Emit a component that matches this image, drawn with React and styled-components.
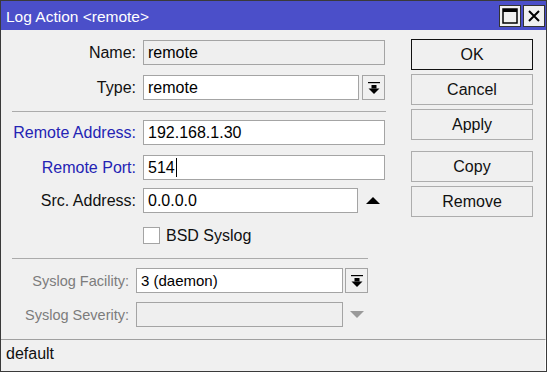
import React from 'react';
import styled, { createGlobalStyle } from 'styled-components';

const Global = createGlobalStyle`
    html, body {
        margin: 0;
        padding: 0;
        background: #f0f0f0;
    }
    body {
        font-family: "Liberation Sans", Arial, sans-serif;
    }
`

function DropIcon() {
    return (
        <svg width="12" height="12" viewBox="0 0 12 12">
            <rect x="0" y="0" width="12" height="1.2" fill="#000" />
            <rect x="3.5" y="3" width="5" height="3.5" fill="#000" />
            <polygon points="0.5,6.5 11.5,6.5 6,12" fill="#000" />
        </svg>
    )
}

function Triangle({ up, color }) {
    return (
        <svg width="14" height="7" viewBox="0 0 14 7">
            <polygon points={up ? '0,7 14,7 7,0' : '0,0 14,0 7,7'} fill={color} />
        </svg>
    )
}

function App() {
    return (
        <>
            <Global />
            <Window>
                <TitleBar>
                    <TitleText>Log Action &lt;remote&gt;</TitleText>
                    <WinButtons>
                        <WinButton>
                            <svg width="16" height="16" viewBox="0 0 16 16">
                                <rect x="1" y="1" width="14" height="14" fill="none" stroke="#000" strokeWidth="1.5" />
                                <rect x="1" y="1" width="14" height="3" fill="#000" />
                            </svg>
                        </WinButton>
                        <WinButton>
                            <svg width="14" height="14" viewBox="0 0 14 14">
                                <path d="M2 2 L12 12 M12 2 L2 12" stroke="#000" strokeWidth="2" />
                            </svg>
                        </WinButton>
                    </WinButtons>
                </TitleBar>

                <Body>
                    <Form>
                        <Row $mt={10}>
                            <Label $w={135}>Name:</Label>
                            <Field $w={242} $disabled>remote</Field>
                        </Row>
                        <Row $mt={10}>
                            <Label $w={135}>Type:</Label>
                            <Field $w={216}>remote</Field>
                            <DropButton $ml={3}><DropIcon /></DropButton>
                        </Row>
                        <Separator $mt={11} $w={374} />
                        <Row $mt={8}>
                            <Label $w={135} $tone="blue">Remote Address:</Label>
                            <Field $w={242}>192.168.1.30</Field>
                        </Row>
                        <Row $mt={10}>
                            <Label $w={135} $tone="blue">Remote Port:</Label>
                            <Field $w={242}>514<Caret /></Field>
                        </Row>
                        <Row $mt={8}>
                            <Label $w={135}>Src. Address:</Label>
                            <Field $w={215}>0.0.0.0</Field>
                            <ArrowSlot $w={30}><Triangle up color="#000" /></ArrowSlot>
                        </Row>
                        <Row $mt={10}>
                            <Label $w={135} />
                            <CheckBox />
                            <CheckText>BSD Syslog</CheckText>
                        </Row>
                        <Separator $mt={10} $w={356} />
                        <Row $mt={9}>
                            <Label $w={128} $tone="grey" $size={14.5}>Syslog Facility:</Label>
                            <Field $w={207} $size={15}>3 (daemon)</Field>
                            <DropButton $ml={2}><DropIcon /></DropButton>
                        </Row>
                        <Row $mt={9}>
                            <Label $w={128} $tone="grey" $size={14.5}>Syslog Severity:</Label>
                            <Field $w={207} $disabled />
                            <ArrowSlot $w={28}><Triangle color="#9a9a9a" /></ArrowSlot>
                        </Row>
                    </Form>

                    <Buttons>
                        <Button $default>OK</Button>
                        <Button>Cancel</Button>
                        <Button>Apply</Button>
                        <Button $mt={7}>Copy</Button>
                        <Button>Remove</Button>
                    </Buttons>
                </Body>

                <StatusBar>default</StatusBar>
            </Window>
        </>
    )
}

export default App;

const Window = styled.div`
    width: 547px;
    height: 372px;
    box-sizing: border-box;
    border: 1px solid #3a3a3a;
    background: #f0f0f0;
    display: flex;
    flex-direction: column;
    overflow: hidden;
`

const TitleBar = styled.div`
    height: 29px;
    background: #4b4fc9;
    display: flex;
    align-items: center;
    justify-content: space-between;
    padding: 0 1px 0 5px;
`

const TitleText = styled.div`
    color: #fff;
    font-size: 15.5px;
    margin-top: 2px;
`

const WinButtons = styled.div`
    display: flex;
    gap: 2px;
`

const WinButton = styled.div`
    width: 22px;
    height: 22px;
    box-sizing: border-box;
    background: #f0f0f0;
    border: 1px solid #333;
    display: flex;
    align-items: center;
    justify-content: center;
`

const Body = styled.div`
    height: 309px;
    display: flex;
`

const Form = styled.div`
    width: 410px;
    display: flex;
    flex-direction: column;
`

const Row = styled.div`
    display: flex;
    align-items: center;
    height: 25px;
    margin-top: ${p => p.$mt || 0}px;
`

const labelColors = {
    blue: '#2424b4',
    grey: '#7c7c7c',
}

const Label = styled.div`
    width: ${p => p.$w}px;
    margin-right: 7px;
    text-align: right;
    font-size: ${p => p.$size || 16}px;
    color: ${p => labelColors[p.$tone] || '#111'};
    white-space: nowrap;
`

const Field = styled.div`
    width: ${p => p.$w}px;
    height: 25px;
    box-sizing: border-box;
    border: 1px solid #a4a4a4;
    background: ${p => p.$disabled ? '#efefef' : '#fff'};
    font-size: ${p => p.$size || 16}px;
    color: #000;
    padding: 0 4px;
    display: flex;
    align-items: center;
    white-space: nowrap;
`

const Caret = styled.span`
    display: inline-block;
    width: 1px;
    height: 19px;
    background: #000;
    margin-left: 1px;
`

const DropButton = styled.div`
    width: 23px;
    height: 25px;
    box-sizing: border-box;
    margin-left: ${p => p.$ml}px;
    border: 1px solid #a4a4a4;
    background: #f0f0f0;
    display: flex;
    align-items: center;
    justify-content: center;
`

const ArrowSlot = styled.div`
    width: ${p => p.$w}px;
    display: flex;
    align-items: center;
    justify-content: center;
`

const CheckBox = styled.div`
    width: 17px;
    height: 17px;
    box-sizing: border-box;
    border: 1px solid #a4a4a4;
    background: #fff;
`

const CheckText = styled.div`
    margin-left: 6px;
    font-size: 16px;
    color: #111;
`

const Separator = styled.div`
    width: ${p => p.$w}px;
    height: 0;
    margin-left: 11px;
    margin-top: ${p => p.$mt}px;
    border-top: 1px solid #ababab;
`

const Buttons = styled.div`
    width: 122px;
    padding-top: 9px;
    display: flex;
    flex-direction: column;
    gap: 4px;
`

const Button = styled.div`
    height: 31px;
    box-sizing: border-box;
    margin-top: ${p => p.$mt || 0}px;
    border: 1px solid ${p => p.$default ? '#111' : '#adadad'};
    background: #f0f0f0;
    font-size: 16px;
    color: #111;
    display: flex;
    align-items: center;
    justify-content: center;
`

const StatusBar = styled.div`
    flex: 1;
    border-top: 1px solid #a0a0a0;
    border-right: 1px solid #fff;
    padding: 0 0 4px 5px;
    font-size: 16px;
    color: #111;
    display: flex;
    align-items: center;
`
